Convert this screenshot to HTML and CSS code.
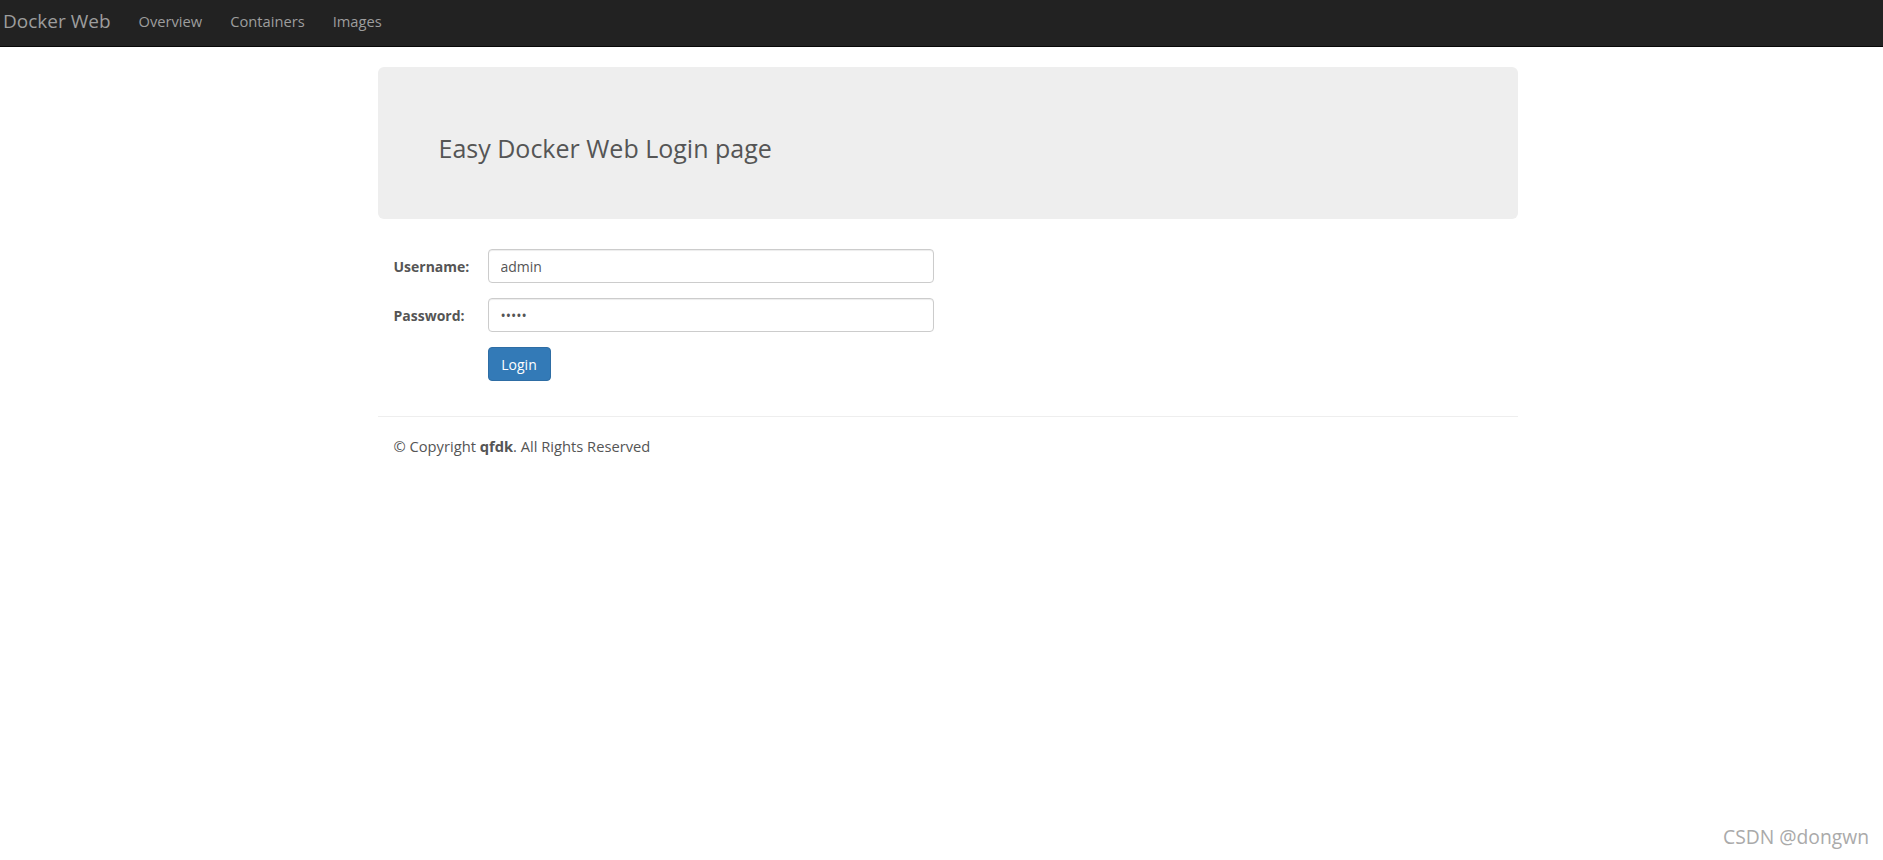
FILE: index.html
```html
<!DOCTYPE html>
<html lang="en">
<head>
<meta charset="utf-8">
<title>Docker Web</title>
<link rel="stylesheet" href="styles.css">
</head>
<body>
<nav class="navbar">
  <a class="brand" href="#">Docker Web</a>
  <ul class="nav">
    <li><a href="#">Overview</a></li>
    <li><a href="#">Containers</a></li>
    <li><a href="#">Images</a></li>
  </ul>
</nav>
<main class="container">
  <div class="jumbotron">
    <h3 class="title">Easy Docker Web Login page</h3>
  </div>
  <form class="login-form">
    <div class="form-row">
      <label class="form-label" for="username">Username:</label>
      <input class="form-control" id="username" type="text" value="admin">
    </div>
    <div class="form-row">
      <label class="form-label" for="password">Password:</label>
      <input class="form-control" id="password" type="password" value="admin">
    </div>
    <div class="form-row form-actions">
      <button class="btn-primary" type="button">Login</button>
    </div>
  </form>
  <hr class="divider">
  <footer class="footer">© Copyright <strong>qfdk</strong>. All Rights Reserved</footer>
</main>
<div class="watermark">CSDN @dongwn</div>
</body>
</html>
```
FILE: styles.css
```css
* { box-sizing: border-box; }
html, body { margin: 0; padding: 0; }
body {
  font-family: "Open Sans", "Noto Sans", Arial, sans-serif;
  font-size: 14px;
  color: #555;
  background: #fff;
  min-height: 860px;
}
.navbar {
  display: flex;
  align-items: center;
  height: 47px;
  background: #222;
  border-bottom: 1px solid #080808;
  padding: 0 0 4px 3px;
}
.brand {
  font-size: 19px;
  color: #9d9d9d;
  text-decoration: none;
  margin-right: 14px;
}
.nav {
  display: flex;
  list-style: none;
  margin: 0;
  padding: 0;
}
.nav a {
  display: block;
  padding: 0 14px;
  font-size: 14.7px;
  color: #9d9d9d;
  text-decoration: none;
}
.container {
  width: 1140px;
  margin-left: calc(50% - 564px);
}
.jumbotron {
  margin-top: 20px;
  height: 152px;
  background: #eee;
  border-radius: 6px;
  padding: 66px 61px 0;
}
.title {
  margin: 0;
  font-size: 25px;
  line-height: 30px;
  font-weight: 400;
  color: #555;
}
.login-form {
  margin-top: 30px;
  padding-left: 15px;
}
.form-row {
  display: flex;
  align-items: center;
  margin-bottom: 15px;
}
.form-label {
  width: 95px;
  padding-left: 1px;
  font-weight: 700;
  font-size: 14px;
  color: #555;
}
.form-control {
  width: 446px;
  height: 34px;
  padding: 6px 12px;
  font-family: inherit;
  font-size: 14px;
  color: #555;
  background: #fff;
  border: 1px solid #ccc;
  border-radius: 4px;
  box-shadow: inset 0 1px 1px rgba(0,0,0,.075);
  outline: none;
}
.form-actions {
  padding-left: 95px;
  margin-bottom: 0;
}
.btn-primary {
  width: 63px;
  height: 34px;
  padding: 0;
  font-family: inherit;
  font-size: 14px;
  color: #fff;
  background: #337ab7;
  border: 1px solid #2e6da4;
  border-radius: 4px;
}
.divider {
  margin: 35px 0 0;
  border: 0;
  border-top: 1px solid #eee;
}
.footer {
  margin-top: 19px;
  padding-left: 16px;
  font-size: 14.7px;
  line-height: 20px;
  color: #555;
}
.footer strong { color: #555; }
.watermark {
  position: absolute;
  right: 14px;
  top: 825px;
  font-size: 19.3px;
  line-height: 24px;
  color: #aaa;
}
```
